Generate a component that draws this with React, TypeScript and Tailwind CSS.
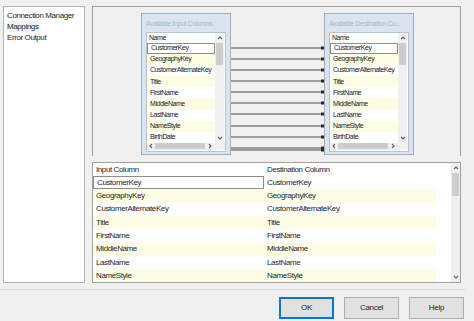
import React from "react";

const sourceRows = [
  "CustomerKey",
  "GeographyKey",
  "CustomerAlternateKey",
  "Title",
  "FirstName",
  "MiddleName",
  "LastName",
  "NameStyle",
  "BirthDate",
];

const mappings = [
  ["CustomerKey", "CustomerKey"],
  ["GeographyKey", "GeographyKey"],
  ["CustomerAlternateKey", "CustomerAlternateKey"],
  ["Title", "Title"],
  ["FirstName", "FirstName"],
  ["MiddleName", "MiddleName"],
  ["LastName", "LastName"],
  ["NameStyle", "NameStyle"],
];

// y of each mapping line, measured from the top of the column boxes
const lineYs = [35, 46, 57, 68, 79, 90, 101, 113, 124, 135, 137];

function Chevron({ dir }: { dir: "up" | "down" | "left" | "right" }) {
  const d = {
    up: "M1 4 L3 2 L5 4",
    down: "M1 2 L3 4 L5 2",
    left: "M4 1 L2 3 L4 5",
    right: "M2 1 L4 3 L2 5",
  }[dir];
  return (
    <svg width="6" height="6" viewBox="0 0 6 6">
      <path d={d} fill="none" stroke="#606060" strokeWidth="1.1" />
    </svg>
  );
}

function ColumnBox({ title }: { title: string }) {
  return (
    <div className="w-[90px] h-[142px] shrink-0 bg-[#dae3ee] border border-[#9dafc6] flex flex-col px-[4px] pb-[2px]">
      <div className="h-[18px] flex items-end pb-[3px] text-[6.8px] tracking-[-0.3px] text-[#a6b7cb] whitespace-nowrap">
        {title}
      </div>
      <div className="flex-1 bg-white border border-[#b7c3d1] flex flex-col overflow-hidden text-[7px] tracking-[-0.45px] text-[#222]">
        <div className="flex h-[109.9px]">
          <div className="w-[68px] flex flex-col">
            <div className="h-[10px] leading-[10px] pl-[2px] shrink-0">Name</div>
            {sourceRows.map((r, i) => (
              <div
                key={r}
                className={`h-[11.1px] shrink-0 flex items-center pl-[3px] whitespace-nowrap ${
                  i % 2 === 1 ? "bg-[#fdfde4]" : "bg-white"
                } ${i === 0 ? "border border-[#8c8c8c] pl-[2px]" : ""}`}
              >
                {r}
              </div>
            ))}
          </div>
          <div className="w-[9px] bg-[#f0f0f0] flex flex-col items-center">
            <div className="h-[10px] flex items-center">
              <Chevron dir="up" />
            </div>
            <div className="w-[7px] h-[22px] bg-[#cdcdcd]" />
            <div className="flex-1" />
            <div className="h-[10px] flex items-center">
              <Chevron dir="down" />
            </div>
          </div>
        </div>
        <div className="flex h-[7px] bg-[#f0f0f0] items-center">
          <div className="w-[8px] flex justify-center">
            <Chevron dir="left" />
          </div>
          <div className="w-[50px] h-[6px] bg-[#cdcdcd]" />
          <div className="w-[10px] flex justify-center">
            <Chevron dir="right" />
          </div>
          <div className="w-[9px]" />
        </div>
      </div>
    </div>
  );
}

function Connectors() {
  return (
    <svg width="93" height="142" className="shrink-0">
      {lineYs.map((y) => (
        <g key={y}>
          <line x1="0" y1={y} x2="92" y2={y} stroke="#4b4b4b" strokeWidth="1.2" />
          <rect x="90" y={y - 1.5} width="3" height="3" fill="#2b2b2b" />
        </g>
      ))}
    </svg>
  );
}

function Button({ label, primary }: { label: string; primary?: boolean }) {
  return (
    <button
      className={`w-[55px] h-[22px] bg-[#e1e1e1] text-[8px] tracking-[-0.3px] text-[#1e1e1e] ${
        primary ? "border-2 border-[#0078d7]" : "border border-[#adadad]"
      }`}
    >
      {label}
    </button>
  );
}

export default function App() {
  return (
    <div className="w-[474px] h-[321px] bg-[#f0f0f0] overflow-hidden flex flex-col font-['Liberation_Sans',Arial,sans-serif] text-[#1e1e1e]">
      <div className="flex pt-[6px] pl-[3px] gap-[7px] h-[283px]">
        {/* left navigation */}
        <nav className="w-[82px] h-[277px] bg-white border border-[#b4b4b4] pt-[3px] pl-[3px] text-[8px] tracking-[-0.4px]">
          <div className="h-[11px] leading-[11px]">Connection Manager</div>
          <div className="h-[11px] leading-[11px] w-fit bg-[#f4f4f4] pr-[2px]">Mappings</div>
          <div className="h-[11px] leading-[11px]">Error Output</div>
        </nav>

        <div className="w-[369px] flex flex-col gap-[6px]">
          {/* mapping diagram */}
          <div className="h-[150px] border-t border-x border-[#a0a0a0] flex items-start pl-[48px] pt-[6px] overflow-hidden">
            <ColumnBox title="Available Input Columns" />
            <Connectors />
            <ColumnBox title="Available Destination Co..." />
          </div>

          {/* mapping grid */}
          <div className="h-[121px] bg-white border border-[#a0a0a0] flex text-[8px] tracking-[-0.4px] overflow-hidden">
            <div className="w-[343px] flex flex-col">
              <div className="h-[13px] shrink-0 flex items-center">
                <div className="w-[171px] pl-[3px]">Input Column</div>
                <div className="w-[172px] pl-[3px]">Destination Column</div>
              </div>
              {mappings.map(([src, dst], i) => (
                <div
                  key={src}
                  className={`h-[13.35px] shrink-0 flex items-center ${
                    i % 2 === 1 ? "bg-[#fdfde6]" : "bg-white"
                  }`}
                >
                  <div
                    className={`w-[171px] h-full flex items-center pl-[3px] ${
                      i === 0 ? "border border-[#8c8c8c] pl-[2px]" : ""
                    }`}
                  >
                    {src}
                  </div>
                  <div className="w-[172px] pl-[3px]">{dst}</div>
                </div>
              ))}
            </div>
            <div className="w-[15px] bg-white" />
            <div className="w-[9px] bg-[#f0f0f0] flex flex-col items-center">
              <div className="h-[10px] flex items-center">
                <Chevron dir="up" />
              </div>
              <div className="w-[7px] h-[23px] bg-[#cdcdcd]" />
              <div className="flex-1" />
              <div className="h-[11px] flex items-center">
                <Chevron dir="down" />
              </div>
            </div>
          </div>
        </div>
      </div>

      <div className="mt-[6px] h-px bg-[#d9d9d9] w-[465px]" />

      <div className="flex justify-end gap-[10px] pr-[10px] mt-[7px]">
        <Button label="OK" primary />
        <Button label="Cancel" />
        <Button label="Help" />
      </div>
    </div>
  );
}
